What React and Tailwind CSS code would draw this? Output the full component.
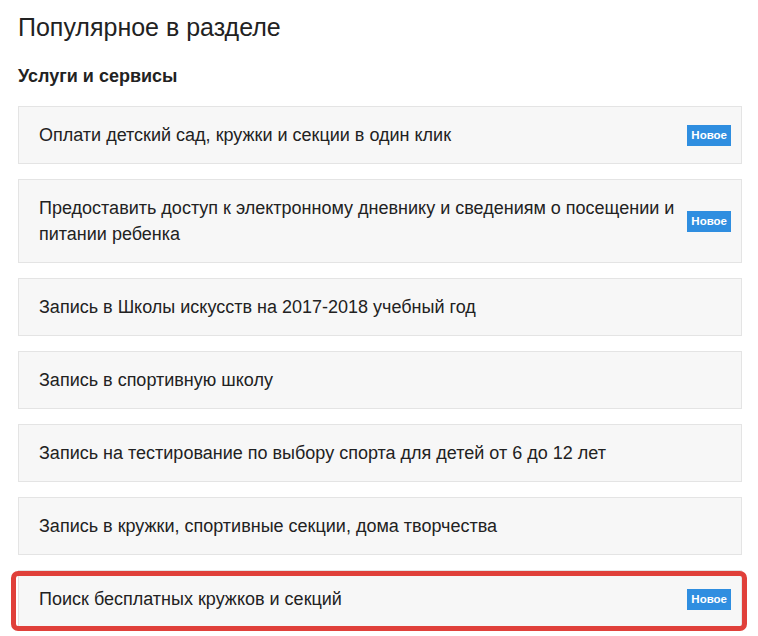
import React from "react";

const items = [
  { title: "Оплати детский сад, кружки и секции в один клик", isNew: true },
  {
    title:
      "Предоставить доступ к электронному дневнику и сведениям о посещении и питании ребенка",
    isNew: true,
  },
  { title: "Запись в Школы искусств на 2017-2018 учебный год" },
  { title: "Запись в спортивную школу" },
  { title: "Запись на тестирование по выбору спорта для детей от 6 до 12 лет" },
  { title: "Запись в кружки, спортивные секции, дома творчества" },
  { title: "Поиск бесплатных кружков и секций", isNew: true, highlighted: true },
];

function ServiceCard({ title, isNew, highlighted }) {
  return (
    <div className="relative">
      <div className="flex items-center justify-between gap-3 border border-[#e4e4e4] bg-[#f7f7f7] py-[15px] pl-5 pr-[10px]">
        <span className="text-[18px] leading-[26px] text-[#222]">{title}</span>
        {isNew && (
          <span className="shrink-0 bg-[#2f8ee0] px-[4px] text-[11.5px] font-bold leading-[21px] text-white">
            Новое
          </span>
        )}
      </div>
      {highlighted && (
        <div className="pointer-events-none absolute -bottom-[3px] -left-[7px] -right-[5px] top-[1px] rounded-[7px] border-[5px] border-[#e0403a]" />
      )}
    </div>
  );
}

export default function App() {
  return (
    <div
      className="min-h-screen bg-white pl-[18px] pr-4 pt-[11px]"
      style={{ fontFamily: '"Liberation Sans", Arial, sans-serif' }}
    >
      <h1 className="text-[25px] leading-8 text-[#222]">Популярное в разделе</h1>
      <h2 className="mt-[21px] text-[18px] font-bold leading-6 text-[#222]">Услуги и сервисы</h2>
      <div className="mt-[18px] flex flex-col gap-[15px]">
        {items.map((item) => (
          <ServiceCard key={item.title} {...item} />
        ))}
      </div>
    </div>
  );
}
